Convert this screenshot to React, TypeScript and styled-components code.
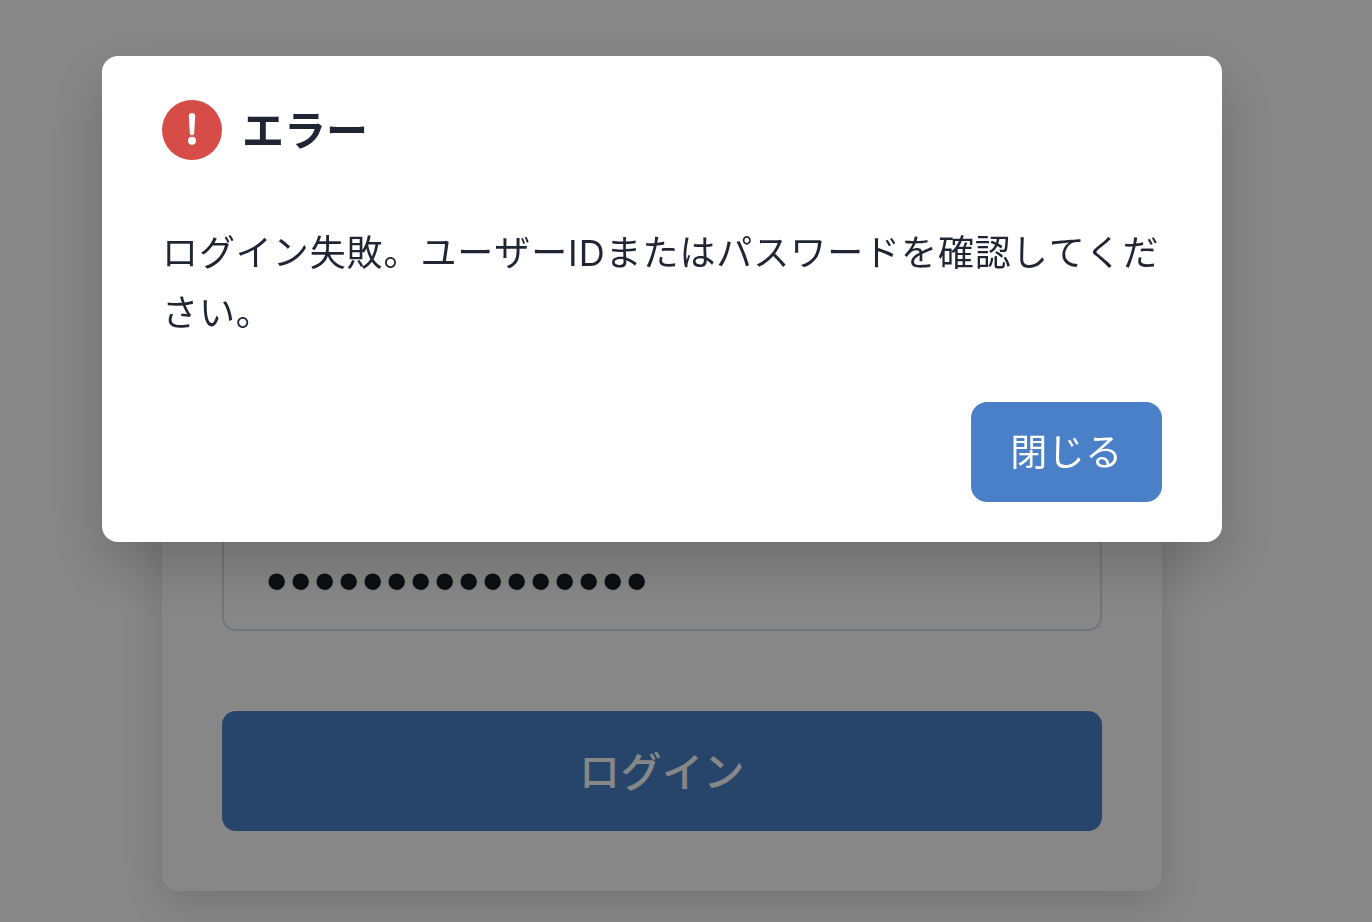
import React from "react";
import styled, { createGlobalStyle } from "styled-components";

const Global = createGlobalStyle`
  html, body { margin: 0; padding: 0; height: 100%; overflow: hidden; }
  body {
    background: #fff;
    font-family: Inter, "Noto Sans CJK JP", sans-serif;
    font-kerning: none;
    font-feature-settings: "palt" 0, "kern" 0;
    text-spacing-trim: space-all;
  }
  button { font-kerning: none; font-feature-settings: "palt" 0, "kern" 0; text-spacing-trim: space-all; }
`;

const Page = styled.main`
  height: 922px;
  display: flex;
  flex-direction: column;
  justify-content: flex-end;
  align-items: center;
  padding: 0 48px 31px 0;
  box-sizing: border-box;
  background: #ffffff;
`;

const LoginCard = styled.form`
  width: 1000px;
  box-sizing: border-box;
  padding: 60px;
  display: flex;
  flex-direction: column;
  gap: 80px;
  background: #ffffff;
  border-radius: 16px;
  box-shadow: 0 10px 40px rgba(0, 0, 0, 0.16);
`;

const PasswordField = styled.input`
  display: block;
  width: 100%;
  height: 100px;
  box-sizing: border-box;
  padding: 0 42px;
  border: 2px solid #d8dde6;
  border-radius: 14px;
  background: transparent;
  color: #1a1d26;
  font-family: "Liberation Sans", sans-serif;
  font-size: 61px;
  letter-spacing: 2.65px;
  outline: none;
`;

const LoginButton = styled.button`
  height: 120px;
  padding: 0 0 4px;
  border: 0;
  border-radius: 14px;
  background: #4a80c8;
  color: #ffffff;
  font: 500 41px Inter, "Noto Sans CJK JP", sans-serif;
  letter-spacing: 0.5px;
`;

const Overlay = styled.div`
  position: fixed;
  inset: 0;
  background: rgba(0, 0, 0, 0.47);
  display: flex;
  justify-content: center;
  align-items: flex-start;
  padding: 56px 48px 0 0;
  box-sizing: border-box;
`;

const Modal = styled.section`
  width: 1120px;
  height: 486px;
  flex: none;
  box-sizing: border-box;
  padding: 44px 60px 40px;
  background: #ffffff;
  border-radius: 16px;
  display: flex;
  flex-direction: column;
  box-shadow: 0 24px 60px rgba(0, 0, 0, 0.2);
`;

const Header = styled.header`
  display: flex;
  align-items: center;
  gap: 20px;
  margin-bottom: 63px;
`;

const Title = styled.h2`
  margin: 0;
  padding-top: 2px;
  font-size: 42px;
  line-height: 58px;
  font-weight: 700;
  color: #1f2533;
`;

const Message = styled.p`
  margin: 0;
  font-size: 36px;
  line-height: 60px;
  letter-spacing: 0.92px;
  color: #1f2533;
`;

const Actions = styled.footer`
  margin-top: auto;
  display: flex;
  justify-content: flex-end;
`;

const CloseButton = styled.button`
  width: 191px;
  height: 100px;
  padding: 0 0 4px;
  border: 0;
  border-radius: 16px;
  background: #4a80c8;
  color: #ffffff;
  font: 400 37px Inter, "Noto Sans CJK JP", sans-serif;
  letter-spacing: 0.5px;
`;

const ErrorIcon = () => (
  <svg width="60" height="60" viewBox="0 0 60 60" aria-hidden="true">
    <circle cx="30" cy="30" r="30" fill="#d64c47" />
    <path d="M26.8 16.2a3.2 3.2 0 0 1 6.4 0L32.2 33a2.2 2.2 0 0 1-4.4 0Z" fill="#fff" />
    <circle cx="30" cy="40.8" r="4" fill="#fff" />
  </svg>
);

export default function App() {
  return (
    <>
      <Global />
      <Page>
        <LoginCard onSubmit={(e) => e.preventDefault()}>
          <PasswordField type="password" defaultValue="password12345678" readOnly />
          <LoginButton type="button">ログイン</LoginButton>
        </LoginCard>
      </Page>
      <Overlay>
        <Modal role="alertdialog">
          <Header>
            <ErrorIcon />
            <Title>エラー</Title>
          </Header>
          <Message>ログイン失敗。ユーザーIDまたはパスワードを確認してください。</Message>
          <Actions>
            <CloseButton type="button">閉じる</CloseButton>
          </Actions>
        </Modal>
      </Overlay>
    </>
  );
}
